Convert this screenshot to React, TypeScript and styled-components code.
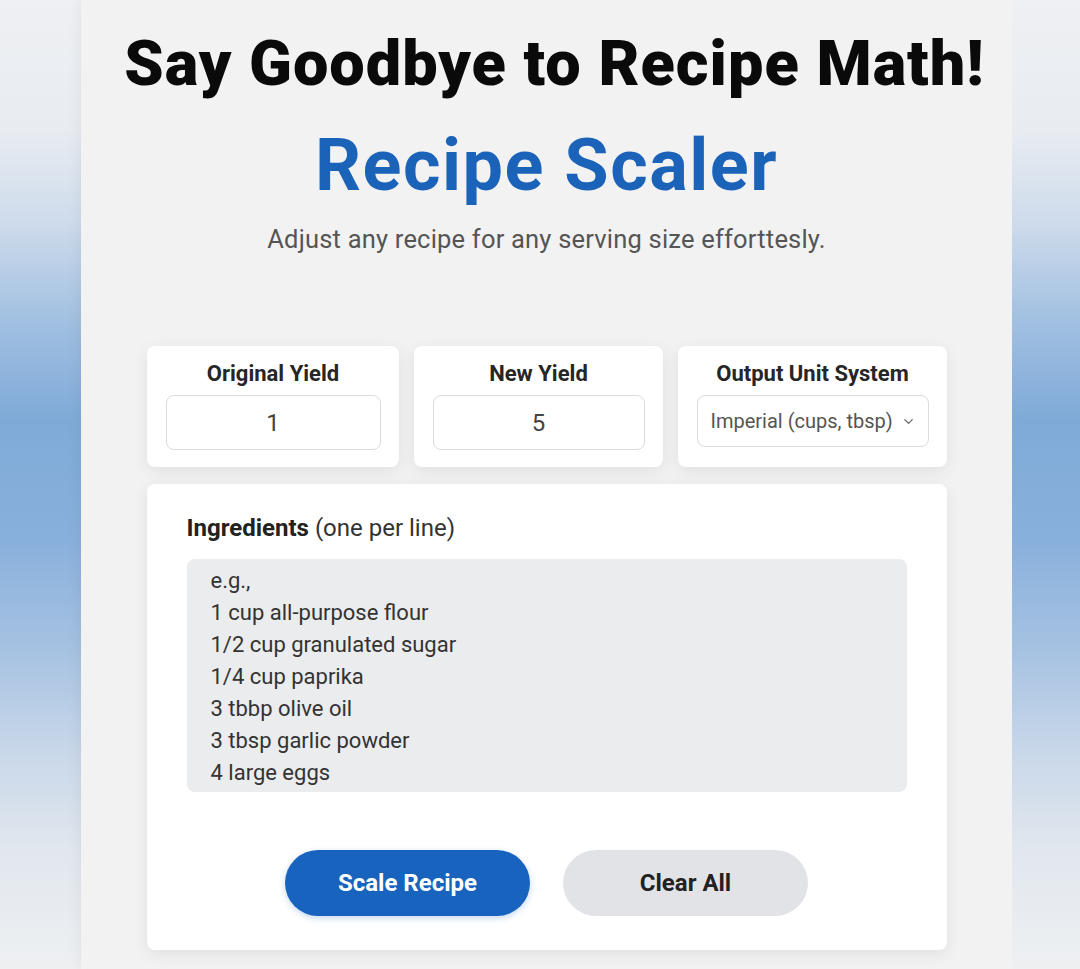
import styled, { createGlobalStyle } from "styled-components";
import { ChevronDown } from "lucide-react";

const GlobalStyle = createGlobalStyle`
    body {
        margin: 0;
        font-family: Roboto, "Liberation Sans", sans-serif;
        background: #f2f2f3;
    }
`;

const Page = styled.div`
    display: grid;
    grid-template-columns: 81px 931px 1fr;
    min-height: 969px;
`;

const Side = styled.div`
    background: linear-gradient(
        180deg,
        #eef0f3 0px,
        #e8ecf1 130px,
        #cfdcec 220px,
        #a2c0e1 320px,
        #7faad8 420px,
        #89b0dc 540px,
        #a6c2e2 650px,
        #c8d7e9 750px,
        #e1e7ee 850px,
        #eef0f2 969px
    );
`;

const Panel = styled.main`
    background: #f2f2f3;
    box-shadow: 0 0 14px rgba(0, 0, 0, 0.07);
    display: flex;
    flex-direction: column;
    align-items: center;
    padding: 28px 0 19px;
`;

const Headline = styled.h1`
    margin: 0 0 0 16px;
    font-size: 63px;
    line-height: 72px;
    font-weight: 900;
    color: #0a0a0a;
    white-space: nowrap;
    letter-spacing: 1px;
`;

const Title = styled.h2`
    margin: 24px 0 0;
    font-size: 72px;
    line-height: 84px;
    font-weight: 700;
    color: #1b63b8;
    letter-spacing: 1.5px;
`;

const Subtitle = styled.p`
    margin: 16px 0 0;
    font-size: 25.5px;
    line-height: 30px;
    letter-spacing: 0.2px;
    color: #555;
`;

const Settings = styled.section`
    margin-top: 92px;
    display: grid;
    grid-template-columns: 252px 249px 269px;
    gap: 15px;
`;

const Card = styled.div`
    background: #fff;
    border-radius: 8px;
    box-shadow: 0 4px 16px rgba(0, 0, 0, 0.08);
`;

const FieldCard = styled(Card)`
    padding: 15px 18px 17px 19px;
    display: flex;
    flex-direction: column;
    gap: 8px;
`;

const Label = styled.label`
    font-size: 22px;
    line-height: 26px;
    font-weight: 700;
    color: #262626;
    text-align: center;
`;

const NumberInput = styled.input`
    box-sizing: border-box;
    width: 100%;
    height: 55px;
    border: 1.5px solid #dcdcdc;
    border-radius: 8px;
    background: #fff;
    font-family: inherit;
    font-size: 24px;
    color: #444;
    text-align: center;
    outline: none;
`;

const SelectBox = styled.div`
    box-sizing: border-box;
    height: 52px;
    border: 1.5px solid #dcdcdc;
    border-radius: 8px;
    display: flex;
    align-items: center;
    justify-content: space-between;
    padding: 0 12px 0 13px;
    font-size: 20px;
    color: #555;

    svg {
        color: #666;
    }
`;

const IngredientsCard = styled(Card)`
    box-sizing: border-box;
    width: 800px;
    margin-top: 17px;
    padding: 30px 40px 34px;
`;

const IngLabel = styled.label`
    display: block;
    font-size: 24px;
    line-height: 28px;
    color: #333;

    strong {
        font-weight: 700;
        color: #222;
    }
`;

const IngText = styled.textarea`
    box-sizing: border-box;
    display: block;
    width: 100%;
    height: 233px;
    margin-top: 17px;
    padding: 6px 24px 4px;
    border: none;
    border-radius: 8px;
    background: #ebecee;
    font-family: inherit;
    font-size: 22px;
    line-height: 32px;
    color: #333;
    resize: none;
    outline: none;
    overflow: hidden;
`;

const Actions = styled.div`
    margin-top: 58px;
    display: flex;
    justify-content: center;
    gap: 33px;
`;

const Button = styled.button<{ $primary?: boolean }>`
    width: 245px;
    height: 66px;
    border: none;
    border-radius: 33px;
    font-family: inherit;
    font-size: 24px;
    font-weight: 700;
    background: ${(p) => (p.$primary ? "#1863bd" : "#e1e3e6")};
    color: ${(p) => (p.$primary ? "#fff" : "#222")};
    box-shadow: ${(p) => (p.$primary ? "0 2px 6px rgba(24, 99, 189, 0.25)" : "none")};
    cursor: pointer;
`;

const sample = `e.g.,
1 cup all-purpose flour
1/2 cup granulated sugar
1/4 cup paprika
3 tbbp olive oil
3 tbsp garlic powder
4 large eggs`;

export default function App() {
    return (
        <>
            <GlobalStyle />
            <Page>
                <Side />
                <Panel>
                    <Headline>Say Goodbye to Recipe Math!</Headline>
                    <Title>Recipe Scaler</Title>
                    <Subtitle>Adjust any recipe for any serving size efforttesly.</Subtitle>

                    <Settings>
                        <FieldCard>
                            <Label>Original Yield</Label>
                            <NumberInput defaultValue="1" />
                        </FieldCard>
                        <FieldCard>
                            <Label>New Yield</Label>
                            <NumberInput defaultValue="5" />
                        </FieldCard>
                        <FieldCard>
                            <Label>Output Unit System</Label>
                            <SelectBox>
                                <span>Imperial (cups, tbsp)</span>
                                <ChevronDown size={15} strokeWidth={2} />
                            </SelectBox>
                        </FieldCard>
                    </Settings>

                    <IngredientsCard>
                        <IngLabel>
                            <strong>Ingredients</strong> (one per line)
                        </IngLabel>
                        <IngText defaultValue={sample} spellCheck={false} />
                        <Actions>
                            <Button $primary>Scale Recipe</Button>
                            <Button>Clear All</Button>
                        </Actions>
                    </IngredientsCard>
                </Panel>
                <Side />
            </Page>
        </>
    );
}
